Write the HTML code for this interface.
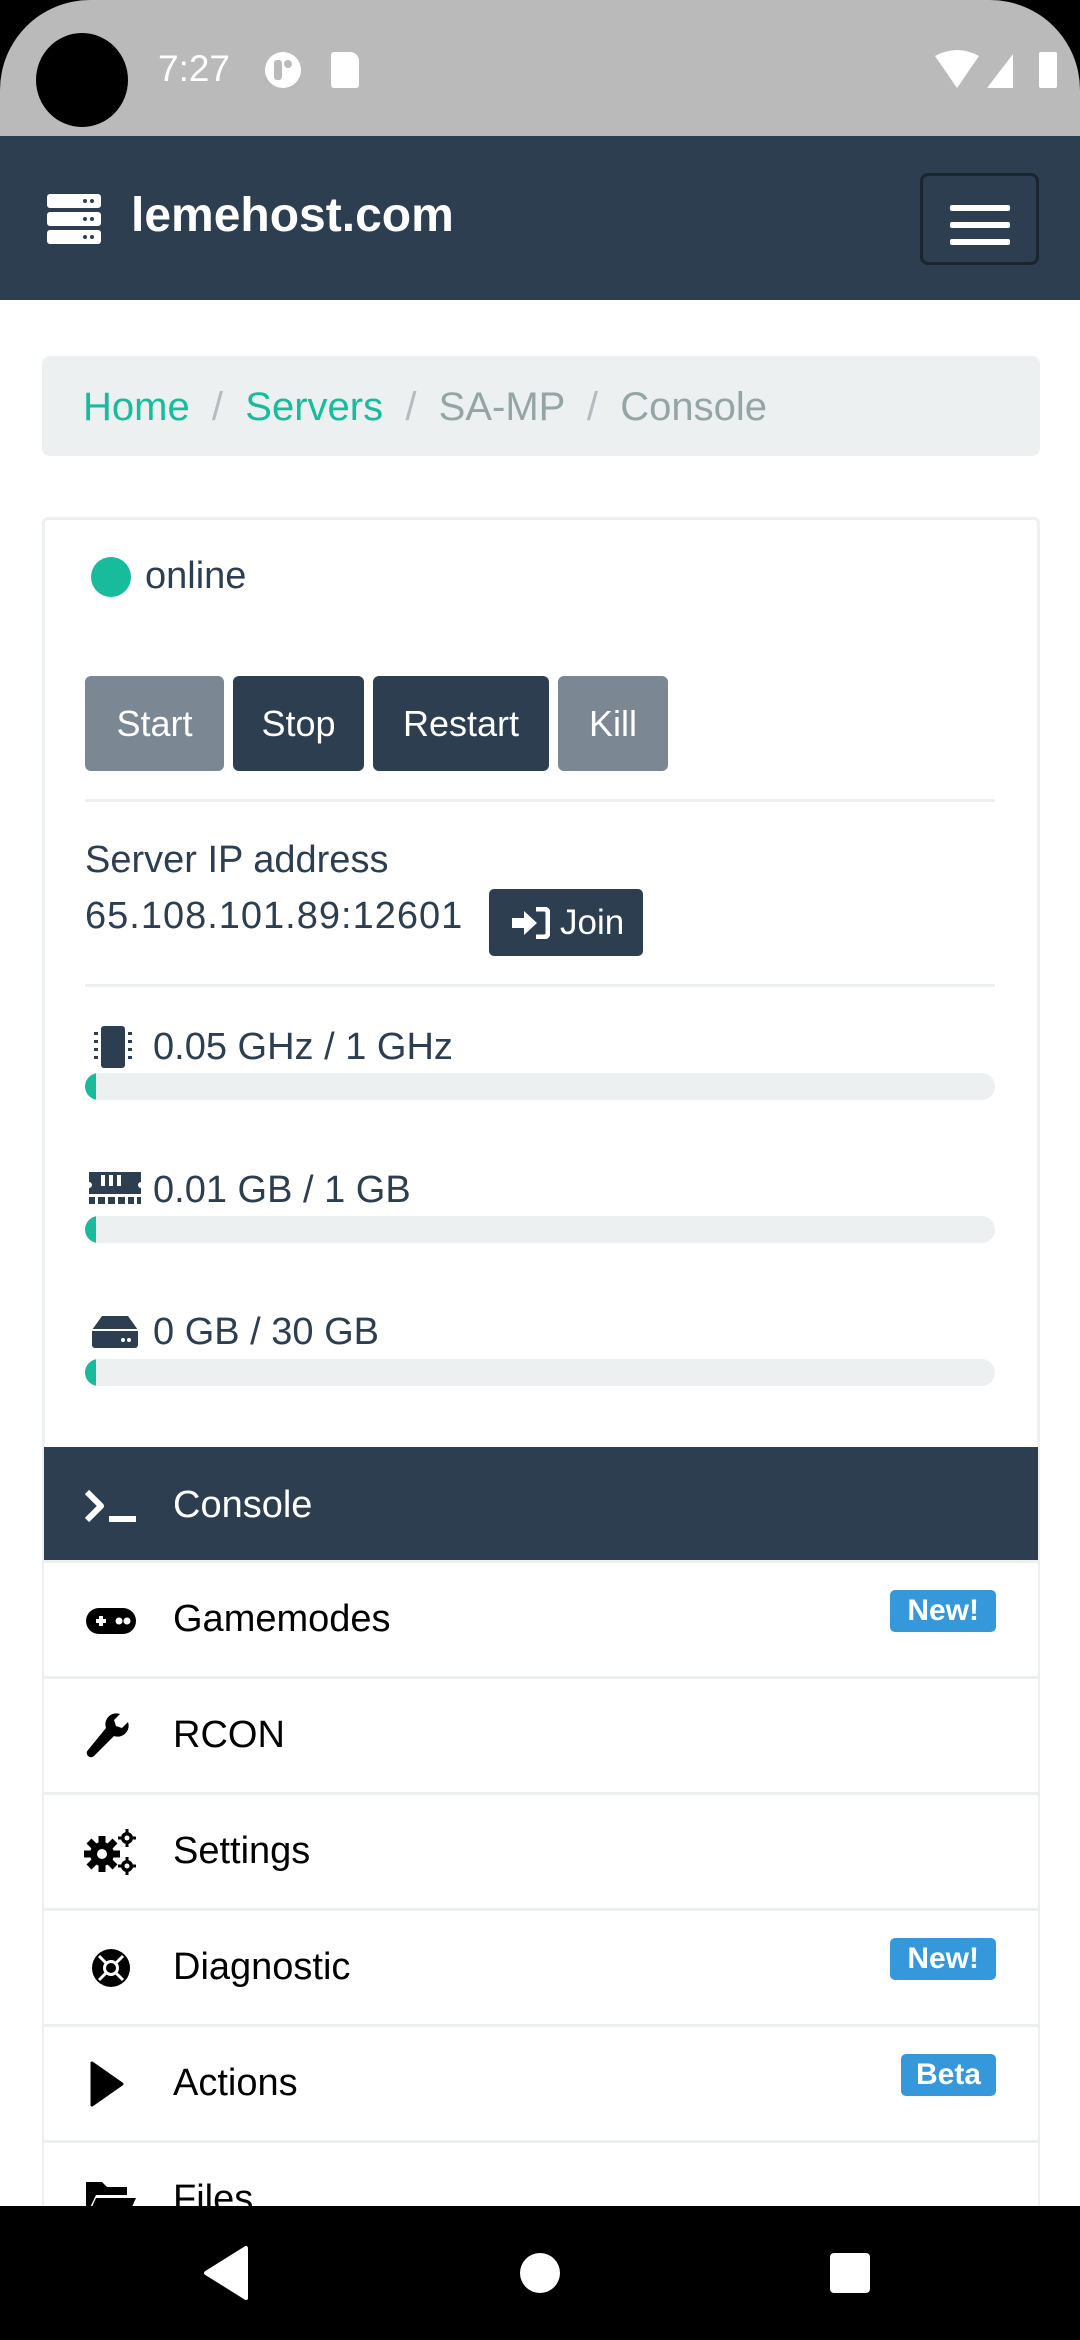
<!DOCTYPE html>
<html style="overflow:hidden;height:2340px"><head><meta charset="utf-8"><style>
*{margin:0;padding:0;box-sizing:border-box}
body{width:1080px;height:2340px;position:relative;background:#fff;font-family:"Liberation Sans",sans-serif;color:#2c3e50;overflow:hidden}
.a{position:absolute}
.t{position:absolute;white-space:nowrap;line-height:1}
.btn{position:absolute;top:676px;height:95px;border-radius:6px;color:#fff;font-size:36px;display:flex;align-items:center;justify-content:center}
.bar{position:absolute;left:85px;width:910px;height:27px;background:#ecf0f1;border-radius:14px;overflow:hidden}
.bar i{position:absolute;left:0;top:0;height:100%;width:11px;background:#18bc9c}
.li{position:absolute;left:44px;width:994px;height:116px;border-top:3px solid #ecf0f1;background:#fff}
.li .ic{position:absolute;left:40px;top:33px;width:54px;height:48px}
.li .lt{position:absolute;left:129px;top:0;line-height:112px;font-size:38px;color:#000}
.badge{position:absolute;right:42px;top:27px;height:42px;border-radius:5px;background:#3498db;color:#fff;font-weight:bold;font-size:30px;line-height:42px;padding:0 17px}
</style></head><body>
<!-- status bar -->
<div class="a" style="left:0;top:0;width:1080px;height:136px;background:#000"></div>
<div class="a" style="left:0;top:0;width:1080px;height:136px;background:#bababa;border-radius:90px 90px 0 0"></div>
<div class="a" style="left:36px;top:33px;width:92px;height:94px;border-radius:50%;background:#000"></div>
<div class="t" style="left:158px;top:50px;font-size:37px;color:#fff">7:27</div>
<div class="a" style="left:265px;top:52px;width:36px;height:36px;border-radius:50%;background:#fff"><div class="a" style="left:9px;top:8px;width:8px;height:20px;background:#bababa;border-radius:3px"></div><div class="a" style="left:19px;top:8px;width:8px;height:8px;border-radius:50%;background:#bababa"></div></div>
<div class="a" style="left:331px;top:52px;width:28px;height:36px;background:#fff;border-radius:3px 9px 3px 3px"></div>
<svg class="a" style="left:935px;top:50px" width="135" height="40" viewBox="0 0 135 40"><path d="M0 6 Q22 -6 44 6 L22 38 Z" fill="#fff"/><path d="M52 38 L78 4 L78 38 Z" fill="#fff"/><rect x="104" y="2" width="18" height="36" rx="2" fill="#fff"/></svg>
<!-- navbar -->
<div class="a" style="left:0;top:136px;width:1080px;height:164px;background:#2c3e50"></div>
<svg class="a" style="left:47px;top:194px" width="54" height="50" viewBox="0 0 54 50"><g fill="#fff"><rect y="0" width="54" height="14" rx="3"/><rect y="18" width="54" height="14" rx="3"/><rect y="36" width="54" height="14" rx="3"/></g><g fill="#2c3e50"><circle cx="38" cy="7" r="2"/><circle cx="45" cy="7" r="2"/><circle cx="38" cy="25" r="2"/><circle cx="45" cy="25" r="2"/><circle cx="38" cy="43" r="2"/><circle cx="45" cy="43" r="2"/></g></svg>
<div class="t" style="left:131px;top:192px;font-size:48px;font-weight:bold;color:#fff">lemehost.com</div>
<div class="a" style="left:920px;top:173px;width:119px;height:92px;border:3px solid #1a252f;border-radius:8px"></div>
<div class="a" style="left:950px;top:205px;width:60px;height:6px;background:#fff;border-radius:2px"></div>
<div class="a" style="left:950px;top:222px;width:60px;height:6px;background:#fff;border-radius:2px"></div>
<div class="a" style="left:950px;top:239px;width:60px;height:6px;background:#fff;border-radius:2px"></div>
<!-- breadcrumb -->
<div class="a" style="left:42px;top:356px;width:998px;height:100px;background:#ecf0f1;border-radius:8px"></div>
<div class="t" style="left:83px;top:387px;font-size:40px;color:#18bc9c">Home <span style="color:#b4bcc2">&nbsp;/&nbsp;</span> Servers <span style="color:#b4bcc2">&nbsp;/&nbsp;</span> <span style="color:#95a5a6">SA-MP</span> <span style="color:#b4bcc2">&nbsp;/&nbsp;</span> <span style="color:#95a5a6">Console</span></div>
<!-- card -->
<div class="a" style="left:42px;top:517px;width:998px;height:1720px;border:3px solid #ecf0f1;border-radius:6px"></div>
<div class="a" style="left:91px;top:557px;width:40px;height:40px;border-radius:50%;background:#18bc9c"></div>
<div class="t" style="left:145px;top:557px;font-size:38px">online</div>
<div class="btn" style="left:85px;width:139px;background:#7b8793">Start</div>
<div class="btn" style="left:233px;width:131px;background:#2c3e50">Stop</div>
<div class="btn" style="left:373px;width:176px;background:#2c3e50">Restart</div>
<div class="btn" style="left:558px;width:110px;background:#7b8793">Kill</div>
<div class="a" style="left:85px;top:799px;width:910px;height:3px;background:#ecf0f1"></div>
<div class="t" style="left:85px;top:841px;font-size:38px">Server IP address</div>
<div class="t" style="left:85px;top:897px;font-size:38px;letter-spacing:1px">65.108.101.89:12601</div>
<div class="a" style="left:489px;top:889px;width:154px;height:67px;background:#2c3e50;border-radius:5px"></div>
<svg class="a" style="left:512px;top:907px" width="38" height="32" viewBox="0 0 38 32"><path d="M0 11h12V4l13 12-13 12v-7H0z" fill="#fff"/><path d="M24 2h8a4 4 0 0 1 4 4v20a4 4 0 0 1-4 4h-8" stroke="#fff" stroke-width="5" fill="none"/></svg>
<div class="t" style="left:560px;top:905px;font-size:35px;color:#fff">Join</div>
<div class="a" style="left:85px;top:984px;width:910px;height:3px;background:#ecf0f1"></div>
<!-- cpu -->
<svg class="a" style="left:93px;top:1026px" width="40" height="42" viewBox="0 0 40 42"><rect x="8" y="0" width="24" height="42" rx="3" fill="#2c3e50"/><g fill="#2c3e50"><rect x="1" y="6" width="4" height="3"/><rect x="1" y="14" width="4" height="3"/><rect x="1" y="22" width="4" height="3"/><rect x="1" y="30" width="4" height="3"/><rect x="35" y="6" width="4" height="3"/><rect x="35" y="14" width="4" height="3"/><rect x="35" y="22" width="4" height="3"/><rect x="35" y="30" width="4" height="3"/></g></svg>
<div class="t" style="left:153px;top:1028px;font-size:38px">0.05 GHz / 1 GHz</div>
<div class="bar" style="top:1073px"><i></i></div>
<!-- ram -->
<svg class="a" style="left:89px;top:1172px" width="52" height="32" viewBox="0 0 52 32"><path d="M0 0h52v10a3 3 0 0 0 0 6v16H0V16a3 3 0 0 0 0-6z" fill="#2c3e50"/><g fill="#fff"><rect x="12" y="3" width="4" height="11"/><rect x="20" y="3" width="4" height="11"/><rect x="28" y="3" width="4" height="11"/><rect x="0" y="22" width="52" height="3"/><rect x="6" y="25" width="3" height="7"/><rect x="16" y="25" width="3" height="7"/><rect x="26" y="25" width="3" height="7"/><rect x="36" y="25" width="3" height="7"/><rect x="45" y="25" width="3" height="7"/></g></svg>
<div class="t" style="left:153px;top:1171px;font-size:38px">0.01 GB / 1 GB</div>
<div class="bar" style="top:1216px"><i></i></div>
<!-- hdd -->
<svg class="a" style="left:92px;top:1316px" width="46" height="32" viewBox="0 0 46 32"><path d="M10 0h26l10 14v15a3 3 0 0 1-3 3H3a3 3 0 0 1-3-3V14z" fill="#2c3e50"/><rect x="0" y="13" width="46" height="2" fill="#fff"/><circle cx="31" cy="24" r="2" fill="#fff"/><circle cx="37" cy="24" r="2" fill="#fff"/></svg>
<div class="t" style="left:153px;top:1313px;font-size:38px">0 GB / 30 GB</div>
<div class="bar" style="top:1359px"><i></i></div>
<!-- list -->
<div class="a" style="left:44px;top:1447px;width:994px;height:113px;background:#2c3e50"></div>
<svg class="a" style="left:84px;top:1489px" width="54" height="34" viewBox="0 0 54 34"><path d="M3 3l14 14L3 31" stroke="#fff" stroke-width="6" fill="none" stroke-linejoin="round"/><rect x="25" y="27" width="27" height="6" fill="#fff"/></svg>
<div class="t" style="left:173px;top:1486px;font-size:38px;color:#fff">Console</div>

<div class="li" style="top:1560px"><svg class="ic" viewBox="0 0 54 48"><rect x="2" y="12" width="50" height="26" rx="13" fill="#000"/><path d="M12 25h10M17 20v10" stroke="#fff" stroke-width="4"/><circle cx="35" cy="25" r="3.5" fill="#fff"/><circle cx="43" cy="25" r="3.5" fill="#fff"/></svg><div class="lt">Gamemodes</div><div class="badge">New!</div></div>
<div class="li" style="top:1676px"><svg class="ic" viewBox="0 0 54 48"><path d="M10 44l20-20a11 11 0 0 0 14-14l-6 6-6-2-2-6 6-6a11 11 0 0 0-14 14L4 38a4 4 0 0 0 6 6z" fill="#000"/></svg><div class="lt">RCON</div></div>
<div class="li" style="top:1792px"><svg class="ic" viewBox="0 0 54 48"><g fill="#000"><circle cx="18" cy="26" r="12"/><g stroke="#000" stroke-width="7"><path d="M18 8v36M0 26h36M5 13l26 26M31 13L5 39"/></g><circle cx="43" cy="10" r="6"/><circle cx="43" cy="38" r="6"/><g stroke="#000" stroke-width="3"><path d="M43 1v18M34 10h18M43 29v18M34 38h18"/></g></g><circle cx="18" cy="26" r="5" fill="#fff"/><circle cx="43" cy="10" r="2.5" fill="#fff"/><circle cx="43" cy="38" r="2.5" fill="#fff"/></svg><div class="lt">Settings</div></div>
<div class="li" style="top:1908px"><svg class="ic" viewBox="0 0 54 48"><circle cx="27" cy="24" r="19" fill="#000"/><circle cx="27" cy="24" r="8" fill="#fff"/><circle cx="27" cy="24" r="5" fill="#000"/><g stroke="#fff" stroke-width="3"><path d="M15 12l7 7M39 12l-7 7M15 36l7-7M39 36l-7-7"/></g></svg><div class="lt">Diagnostic</div><div class="badge">New!</div></div>
<div class="li" style="top:2024px"><svg class="ic" viewBox="0 0 54 48"><path d="M8 3l30 21L8 45z" fill="#000" stroke="#000" stroke-width="3" stroke-linejoin="round"/></svg><div class="lt">Actions</div><div class="badge" style="padding:0 15px">Beta</div></div>
<div class="li" style="top:2140px"><svg class="ic" viewBox="0 0 54 48"><path d="M2 6h16l5 5h20v8H12L2 40z" fill="#000"/><path d="M12 22h40L42 44H2z" fill="#000"/></svg><div class="lt">Files</div></div>
<!-- nav bar -->
<div class="a" style="left:0;top:2206px;width:1080px;height:134px;background:#000"></div>
<svg class="a" style="left:200px;top:2240px" width="700" height="66" viewBox="0 0 700 66"><path d="M46 8v50L6 33z" fill="#fff" stroke="#fff" stroke-width="4" stroke-linejoin="round"/><circle cx="340" cy="33" r="20" fill="#fff"/><rect x="630" y="13" width="40" height="40" rx="4" fill="#fff"/></svg>
</body></html>
